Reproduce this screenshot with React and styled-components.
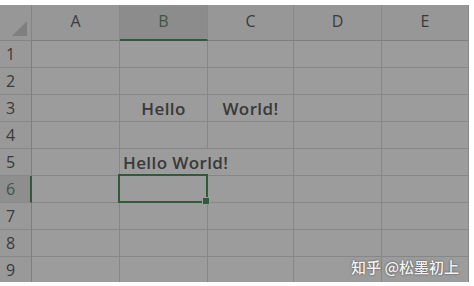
import React from "react";
import styled, { createGlobalStyle } from "styled-components";

const Global = createGlobalStyle`
  html, body { margin: 0; padding: 0; background: #ffffff; }
  body { font-family: "Open Sans", "Liberation Sans", sans-serif; }
`;

const Page = styled.div`
  width: 474px;
  height: 286px;
  padding-top: 5px;
  box-sizing: border-box;
`;

const Sheet = styled.div`
  position: relative;
  width: 469px;
  height: 277px;
  overflow: hidden;
  background: #9c9c9c;
  display: grid;
  grid-template-columns: 32px 88px 88px 86px 88px 87px;
  grid-template-rows: 36px repeat(9, 27px);
`;

const Corner = styled.div`
  background: #979797;
  border-right: 1px solid #848484;
  border-bottom: 1px solid #848484;
  display: flex;
  align-items: flex-end;
  justify-content: flex-end;
  padding: 0 4px 4px 0;
`;

const ColHead = styled.div`
  background: ${(p) => (p.$active ? "#8c8c8c" : "#979797")};
  border-right: 1px solid #888888;
  border-bottom: ${(p) => (p.$active ? "2px solid #33573f" : "1px solid #7e7e7e")};
  color: ${(p) => (p.$active ? "#3e5546" : "#3a3a3a")};
  font-size: 16px;
  display: flex;
  align-items: center;
  justify-content: center;
  padding-bottom: 3px;
`;

const RowHead = styled.div`
  background: ${(p) => (p.$active ? "#8e8e8e" : "#999999")};
  border-right: ${(p) => (p.$active ? "2px solid #33573f" : "1px solid #7e7e7e")};
  border-bottom: 1px solid #888888;
  color: ${(p) => (p.$active ? "#3e5546" : "#3a3a3a")};
  font-size: 16px;
  display: flex;
  align-items: center;
  justify-content: flex-start;
  padding-left: 6px;
`;

const Cell = styled.div`
  position: relative;
  border-right: ${(p) => (p.$noRight ? "1px solid transparent" : "1px solid #878787")};
  border-bottom: 1px solid #878787;
  display: flex;
  align-items: center;
  justify-content: ${(p) => p.$align || "flex-start"};
  padding: 0 ${(p) => (p.$align === "center" ? "0" : "3px")};
  white-space: nowrap;
  overflow: visible;
  font-size: 17px;
  font-weight: 600;
  letter-spacing: 0.4px;
  color: #393939;
  z-index: ${(p) => (p.$over ? 1 : 0)};
`;

const Selection = styled.div`
  position: absolute;
  inset: -2px -1px -1px -2px;
  border: 2px solid #2f5a3c;
  pointer-events: none;
`;

const Handle = styled.div`
  position: absolute;
  right: -4px;
  bottom: -4px;
  width: 6px;
  height: 6px;
  background: #2f5a3c;
  border: 1px solid #9c9c9c;
`;

const Watermark = styled.div`
  position: absolute;
  right: 10px;
  bottom: 5px;
  font-family: "Noto Sans CJK SC", "Noto Sans", sans-serif;
  font-size: 15px;
  font-weight: 500;
  color: #f4f4f4;
  text-shadow: 0 0 2px rgba(50, 50, 50, 0.9);
  z-index: 2;
`;

const cols = ["A", "B", "C", "D", "E"];
const content = {
  "3-B": { text: "Hello", align: "center" },
  "3-C": { text: "World!", align: "center" },
  "5-B": { text: "Hello World!", noRight: true, over: true },
};

export default function App() {
  const cells = [];
  cells.push(
    <Corner key="corner">
      <svg width="15" height="15" viewBox="0 0 15 15">
        <polygon points="15,0 15,15 0,15" fill="#7f7f7f" />
      </svg>
    </Corner>
  );
  cols.forEach((c) =>
    cells.push(
      <ColHead key={c} $active={c === "B"}>
        {c}
      </ColHead>
    )
  );
  for (let r = 1; r <= 9; r++) {
    cells.push(
      <RowHead key={"r" + r} $active={r === 6}>
        {r}
      </RowHead>
    );
    cols.forEach((c) => {
      const info = content[`${r}-${c}`] || {};
      const selected = r === 6 && c === "B";
      cells.push(
        <Cell
          key={`${r}-${c}`}
          $align={info.align}
          $noRight={info.noRight}
          $over={info.over || selected}
        >
          {info.text}
          {selected && (
            <Selection>
              <Handle />
            </Selection>
          )}
        </Cell>
      );
    });
  }
  return (
    <>
      <Global />
      <Page>
        <Sheet>
          {cells}
          <Watermark>知乎 @松墨初上</Watermark>
        </Sheet>
      </Page>
    </>
  );
}
